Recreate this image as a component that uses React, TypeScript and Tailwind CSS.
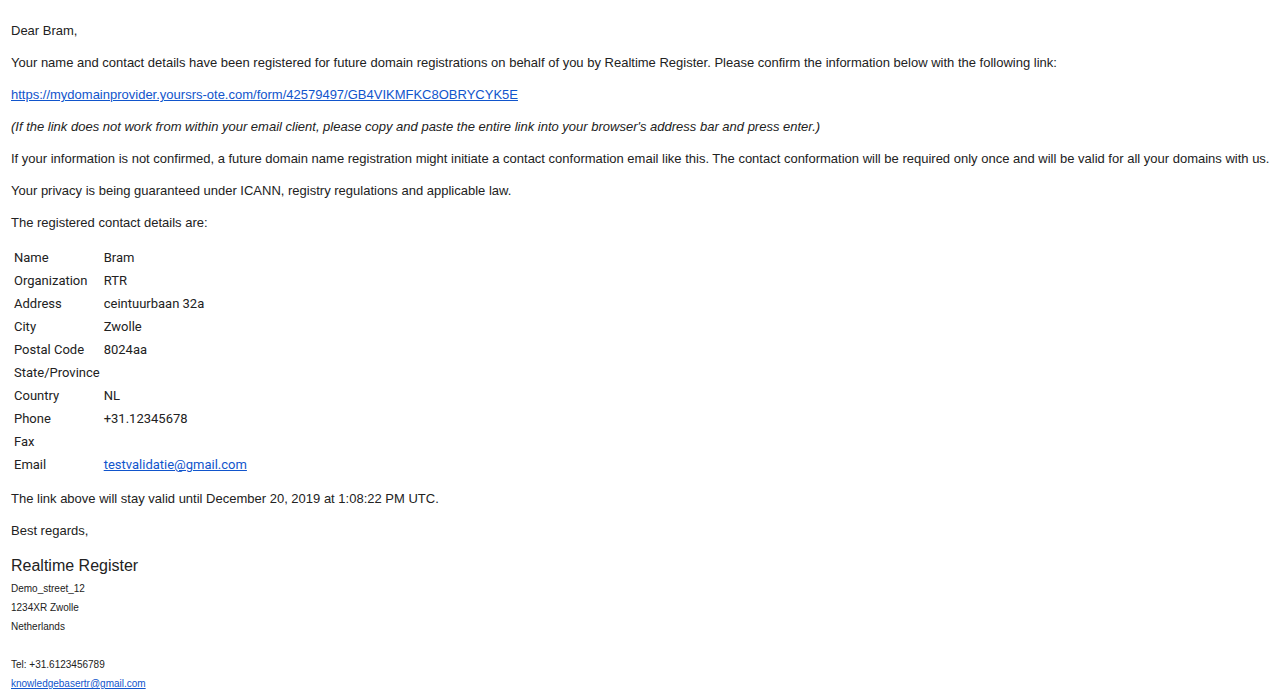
export default function App() {
  const rows: [string, string, boolean?][] = [
    ['Name', 'Bram'],
    ['Organization', 'RTR'],
    ['Address', 'ceintuurbaan 32a'],
    ['City', 'Zwolle'],
    ['Postal Code', '8024aa'],
    ['State/Province', ''],
    ['Country', 'NL'],
    ['Phone', '+31.12345678'],
    ['Fax', ''],
    ['Email', 'testvalidatie@gmail.com', true],
  ];

  return (
    <div className="bg-white min-h-[700px] px-[11px] pt-[22px] text-[13px] leading-[18px] text-[#222] whitespace-nowrap font-['Liberation_Sans',Arial,sans-serif]">
      <p>Dear Bram,</p>
      <p className="mt-[14px]">
        Your name and contact details have been registered for future domain registrations on behalf of you by Realtime Register. Please confirm the information below with the following link:
      </p>
      <p className="mt-[14px]">
        <a href="#" className="text-[#1155cc] underline">
          https://mydomainprovider.yoursrs-ote.com/form/42579497/GB4VIKMFKC8OBRYCYK5E
        </a>
      </p>
      <p className="mt-[14px] italic">
        (If the link does not work from within your email client, please copy and paste the entire link into your browser's address bar and press enter.)
      </p>
      <p className="mt-[14px]">
        If your information is not confirmed, a future domain name registration might initiate a contact conformation email like this. The contact conformation will be required only once and will be valid for all your domains with us.
      </p>
      <p className="mt-[14px]">Your privacy is being guaranteed under ICANN, registry regulations and applicable law.</p>
      <p className="mt-[14px]">The registered contact details are:</p>

      {/* Contact details table */}
      <table className="mt-[14px] border-separate border-spacing-0 font-['Roboto',sans-serif] text-[13px] text-[#222]">
        <tbody>
          {rows.map(([label, value, link]) => (
            <tr key={label}>
              <td className="h-[23px] pl-[3px] pr-[4px] py-0">{label}</td>
              <td className="h-[23px] px-0 py-0">
                {link ? (
                  <a href="#" className="text-[#1155cc] underline">{value}</a>
                ) : (
                  value
                )}
              </td>
            </tr>
          ))}
        </tbody>
      </table>

      <p className="mt-[14px]">The link above will stay valid until December 20, 2019 at 1:08:22 PM UTC.</p>
      <p className="mt-[14px]">Best regards,</p>

      {/* Signature */}
      <div className="mt-[16px] text-[16px] leading-[20px]">Realtime Register</div>
      <div className="text-[10px] leading-[19px] mt-[3px]">
        <div>Demo_street_12</div>
        <div>1234XR Zwolle</div>
        <div>Netherlands</div>
        <div className="h-[19px]" />
        <div>Tel: +31.6123456789</div>
        <div>
          <a href="#" className="text-[#1155cc] underline">knowledgebasertr@gmail.com</a>
        </div>
      </div>
    </div>
  );
}
